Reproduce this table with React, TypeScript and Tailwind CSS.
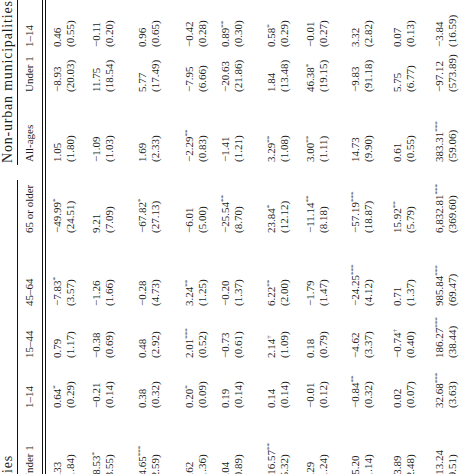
const heads = ["Under 1", "1–14", "15–44", "45–64", "65 or older", "All-ages", "Under 1", "1–14"];

const rows = [
  {
    gap: "mt-[5px]",
    v: ["1.33", "0.64*", "0.79", "−7.83*", "−49.99*", "1.05", "−8.93", "0.46"],
    se: ["(1.84)", "(0.29)", "(1.17)", "(3.57)", "(24.51)", "(1.80)", "(20.03)", "(0.55)"],
  },
  {
    gap: "mt-[12px]",
    v: ["−8.53*", "−0.21", "−0.38", "−1.26", "9.21", "−1.09", "11.75", "−0.11"],
    se: ["(3.55)", "(0.14)", "(0.69)", "(1.66)", "(7.09)", "(1.03)", "(18.54)", "(0.20)"],
  },
  {
    gap: "mt-[19px]",
    v: ["14.65***", "0.38", "0.48", "−0.28", "−67.82*", "1.69", "5.77", "0.96"],
    se: ["(2.59)", "(0.32)", "(2.92)", "(4.73)", "(27.13)", "(2.33)", "(17.49)", "(0.65)"],
  },
  {
    gap: "mt-[20px]",
    v: ["0.62", "0.20*", "2.01***", "3.24**", "−6.01", "−2.29**", "−7.95", "−0.42"],
    se: ["(1.36)", "(0.09)", "(0.52)", "(1.25)", "(5.00)", "(0.83)", "(6.66)", "(0.28)"],
  },
  {
    gap: "mt-[9px]",
    v: ["1.04", "0.19", "−0.73", "−0.20", "−25.54**", "−1.41", "−20.63", "0.89**"],
    se: ["(0.89)", "(0.14)", "(0.61)", "(1.37)", "(8.70)", "(1.21)", "(21.86)", "(0.30)"],
  },
  {
    gap: "mt-[19px]",
    v: ["−16.57**", "0.14", "2.14†", "6.22**", "23.84*", "3.29**", "1.84", "0.58*"],
    se: ["(5.32)", "(0.14)", "(1.09)", "(2.00)", "(12.12)", "(1.08)", "(13.48)", "(0.29)"],
  },
  {
    gap: "mt-[12px]",
    v: ["0.29", "−0.01", "0.18", "−1.79", "−11.14**", "3.00**", "46.38*", "−0.01"],
    se: ["(1.24)", "(0.12)", "(0.79)", "(1.47)", "(8.18)", "(1.11)", "(19.15)", "(0.27)"],
  },
  {
    gap: "mt-[18px]",
    v: ["−5.20", "−0.84**", "−4.62", "−24.25***", "−57.19***", "14.73", "−9.83", "3.32"],
    se: ["(1.14)", "(0.32)", "(3.37)", "(4.12)", "(18.87)", "(9.90)", "(91.18)", "(2.82)"],
  },
  {
    gap: "mt-[15px]",
    v: ["−3.89", "0.02", "−0.74†", "0.71", "15.92**", "0.61", "5.75", "0.07"],
    se: ["(2.48)", "(0.07)", "(0.40)", "(1.37)", "(5.79)", "(0.55)", "(6.77)", "(0.13)"],
  },
  {
    gap: "mt-[15px]",
    v: ["−13.24", "32.68***", "186.27***", "985.84***", "6,832.81***", "383.31***", "−97.12", "−3.84"],
    se: ["(9.51)", "(3.63)", "(38.44)", "(69.47)", "(369.60)", "(59.06)", "(573.89)", "(16.59)"],
  },
];

const grid = "grid grid-cols-[73px_50px_52px_73px_71px_70px_45px_60px]";

// split "1.23**" into number and the raised marks
function Cell({ text }: { text: string }) {
  const m = text.match(/^([^*†]*)([*†]*)$/);
  const num = m ? m[1] : text;
  const mark = m ? m[2] : "";
  return (
    <div className="whitespace-nowrap">
      {num}
      {mark && <sup className="text-[7px]">{mark}</sup>}
    </div>
  );
}

export default function App() {
  return (
    <div className="w-[474px] h-[474px] overflow-hidden bg-white">
      <div className="w-[474px] h-[474px] -rotate-90 text-[11px] leading-[13.5px] text-[#1c1c1c] font-['Liberation_Serif',serif]">
        <div className="ml-[-7px] w-[494px]">
          {/* group headers */}
          <div className="flex h-[16px] text-[14px] leading-[16px] tracking-[0.8px]">
            <div className="w-[26px] flex justify-end">
              <span className="shrink-0 whitespace-nowrap">Urban municipalities</span>
            </div>
            <div className="ml-[292px] whitespace-nowrap">Non-urban municipalities</div>
          </div>
          <div className="flex mt-[1px]">
            <div className="w-[301px] h-px bg-[#111]" />
            <div className="ml-[15px] flex-1 h-px bg-[#111]" />
          </div>

          {/* column headers */}
          <div className={`${grid} mt-[5px]`}>
            {heads.map((h, i) => (
              <div key={i} className="whitespace-nowrap">{h}</div>
            ))}
          </div>

          <div className="mt-[5px] h-px bg-[#111]" />
          <div className="mt-[2px] h-px bg-[#111]" />

          {rows.map((r, i) => (
            <div key={i} className={r.gap}>
              <div className={grid}>
                {r.v.map((t, j) => (
                  <Cell key={j} text={t} />
                ))}
              </div>
              <div className={grid}>
                {r.se.map((t, j) => (
                  <Cell key={j} text={t} />
                ))}
              </div>
            </div>
          ))}
        </div>
      </div>
    </div>
  );
}
